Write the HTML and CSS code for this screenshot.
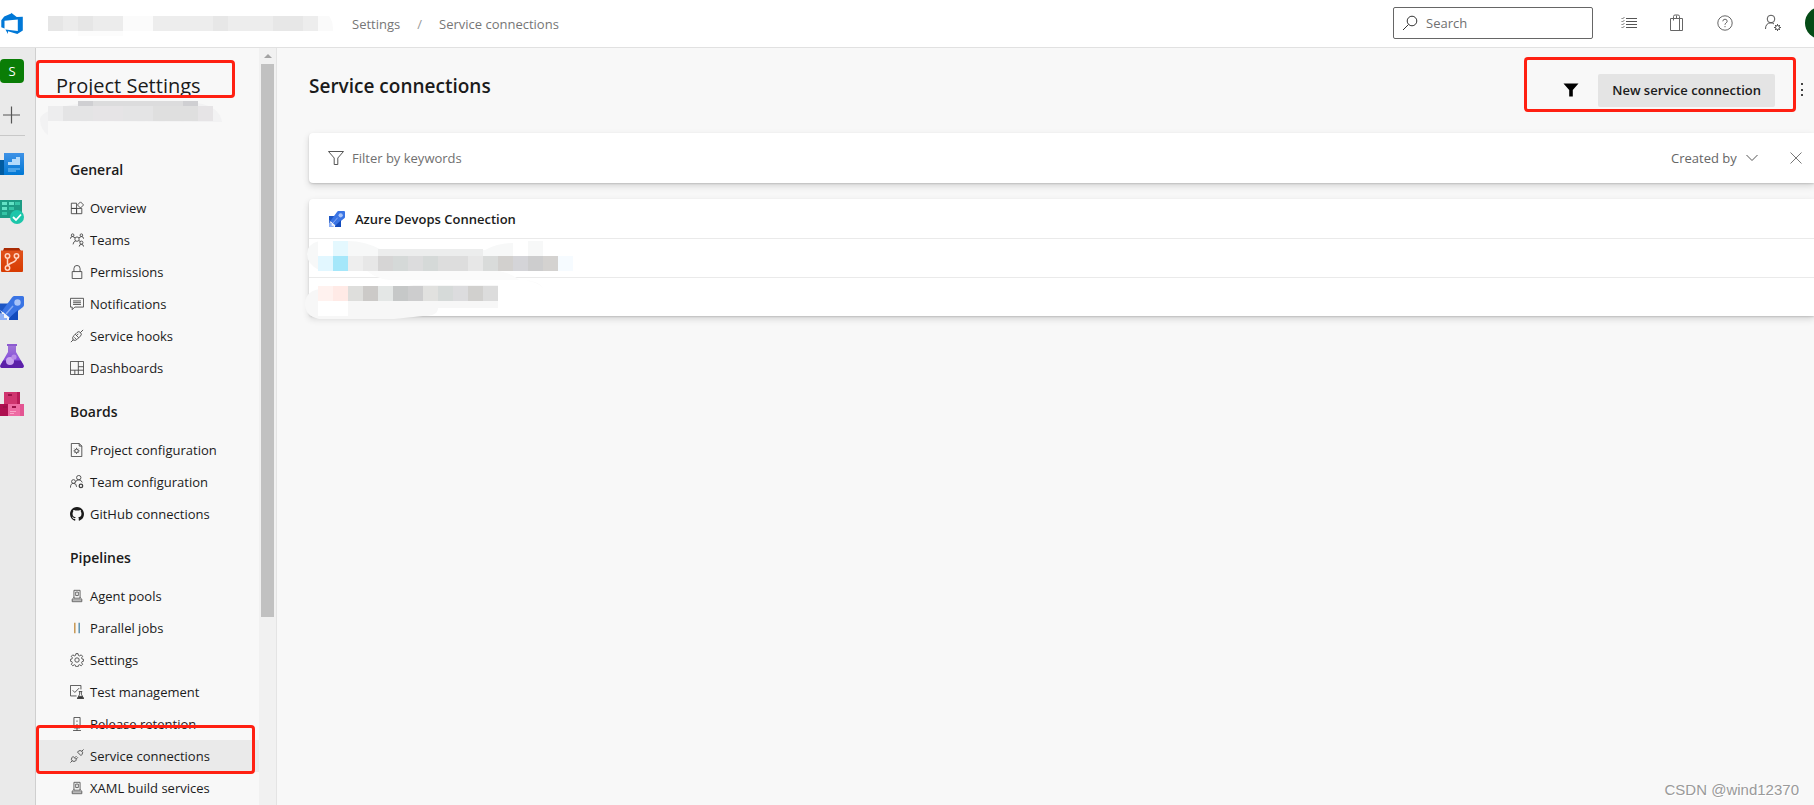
FILE: index.html
```html
<!DOCTYPE html>
<html lang="en">
<head>
<meta charset="utf-8">
<title>Service connections - Project Settings</title>
<link rel="stylesheet" href="styles.css">
</head>
<body>
<svg class="defs" aria-hidden="true">
  <defs>
    <linearGradient id="blue" x1="0" y1="0" x2="0" y2="1"><stop offset="0" stop-color="#3f92e6"/><stop offset="1" stop-color="#0078d4"/></linearGradient>
    <linearGradient id="orange" x1="0" y1="0" x2="0" y2="1"><stop offset="0" stop-color="#e0521c"/><stop offset="1" stop-color="#d83b01"/></linearGradient>
    <linearGradient id="purple" x1="0" y1="0" x2="0" y2="1"><stop offset="0" stop-color="#a177d6"/><stop offset="1" stop-color="#773adc"/></linearGradient>
  </defs>
  <symbol id="rocket" viewBox="0 0 24 24">
    <path d="M0 7.500h9l-7 10H0zM18 14v10H7.500z" fill="#1d56c4"/>
    <path d="M14 0h8.500q1.500 0 1.500 1.500V9q0 1-1 2L9 22l-7-7L12 1.500Q13 0 14 0z" fill="#3a74e4"/>
    <path d="M18 14v10h-9l1-3z" fill="#124bbd"/>
    <circle cx="17.500" cy="6.500" r="3.200" fill="#a9c4f8"/>
    <path d="M13 10l-7 8" stroke="#86aaf3" stroke-width="1.500"/>
    <path d="M0 14l9 7v3H6.500z" fill="#f2f5fb"/>
    <path d="M0 18h4v4h3v2H0z" fill="#8eb0f5"/>
  </symbol>
  <symbol id="server" viewBox="0 0 16 16">
    <path d="M4.500 1.500h7v9h-7zM6.500 3.500h3v4h-3zM4.500 9.500l-2 2.500v2.500h11V12l-2-2.500M2.500 12.500h11" fill="none" stroke="#555"/>
  </symbol>
  <symbol id="funnel" viewBox="0 0 16 16"><path d="M.5 1.500h15L9.800 8v6.500H6.200V8z"/></symbol>
</svg>

<div class="app">
  <header class="topbar">
    <a class="logo" href="#" aria-label="Azure DevOps">
      <svg width="24" height="24" viewBox="0 0 24 24"><path d="M22.800 4.800v13.700L17.300 22 8 19.300V22L5.400 17.600l12.400 1.300V7.400L4.500 8.700v7.800L1.300 15.200V8.300L4.200 4.400l7-2.800V.8l5.500 4.300z" fill="#0078d7"/></svg>
    </a>
    <svg class="crumb-mosaic" width="290" height="22" viewBox="0 0 290 22" aria-hidden="true">
      <path d="M33 16h45v5H33z" fill="#fcfcfc"/>
      <path d="M3 1h75v15H3z" fill="#ececec"/><path d="M3 1h15v15H3zM33 1h15v15H33z" fill="#e6e6e6"/>
      <path d="M78 1h30v15H78z" fill="#fbfbfb"/>
      <path d="M108 1h165v15H108z" fill="#ededed"/><path d="M168 1h15v15h-15zM228 1h30v15h-30z" fill="#e7e7e7"/>
      <path d="M273 1h11q4 4 4 15h-15z" fill="#fafafa"/>
    </svg>
    <nav class="crumbs" aria-label="Breadcrumb">
      <a href="#">Settings</a><span class="slash">/</span><a href="#">Service connections</a>
    </nav>
    <label class="search">
      <svg width="16" height="16" viewBox="0 0 16 16" fill="none" stroke="#333"><circle cx="10" cy="6" r="4.800"/><path d="M6.500 9.500L1 15"/></svg>
      <input type="text" placeholder="Search" aria-label="Search">
    </label>
    <div class="actions">
      <button type="button" aria-label="Work items"><svg width="16" height="16" viewBox="0 0 16 16" fill="none" stroke="#555"><path d="M5 3.500h11M5 6.500h11M5 9.500h11M5 12.500h11" /><path d="M.5 3l1 1L3.500 2M.5 6l1 1 2-2M.5 9l1 1 2-2M.5 12l1 1 2-2" stroke-width=".8"/></svg></button>
      <button type="button" aria-label="Marketplace"><svg width="16" height="18" viewBox="0 0 16 18" fill="none" stroke="#666"><path d="M1.500 4.500h12v12h-12zM10.500 4.500v12M4.500 6.500v-4q0-1.500 1.500-1.500h3q1.500 0 1.500 1.500v2M7.500 4V1.500"/></svg></button>
      <button type="button" aria-label="Help"><svg width="16" height="16" viewBox="0 0 16 16" fill="none" stroke="#666"><circle cx="8" cy="8" r="7.200"/><path d="M5.800 6.300Q6 4.200 8 4.200t2.200 1.900Q10.200 7.200 9 8T8 9.800M8 11v1.200"/></svg></button>
      <button type="button" aria-label="User settings"><svg width="18" height="18" viewBox="0 0 18 18" fill="none" stroke="#555"><circle cx="7" cy="5" r="3.800"/><path d="M1.500 15q0-6 5.500-6.200Q9 9 10 10"/><circle cx="13.500" cy="13.500" r="2"/><path d="M13.500 10v1.500M13.500 15.500V17M10 13.500h1.500M15.500 13.500H17M11 11l1 1M15 15l1 1M16 11l-1 1M12 15l-1 1"/></svg></button>
      <button type="button" class="avatar" aria-label="Account"></button>
    </div>
  </header>

  <div class="body">
    <nav class="rail" aria-label="Services">
      <a class="project" href="#"><span>S</span></a>
      <button type="button" class="add" aria-label="Add"><svg width="24" height="24" viewBox="0 0 24 24"><path d="M3 12h17M11.500 3.500v17" stroke="#555" stroke-width="1.200"/></svg></button>
      <hr>
      <a href="#" aria-label="Overview"><svg width="24" height="24" viewBox="0 0 24 24"><path d="M0 8h5v15H0z" fill="#005ba1"/><path d="M4 1h20v21q0 1-1 1H4z" fill="url(#blue)"/><path d="M8 10h4V7h4V5h4v8H8z" fill="#b5dbfb"/><path d="M8 16h12v2h-4v2H8z" fill="#4ba3e8"/></svg></a>
      <a href="#" aria-label="Boards"><svg width="24" height="24" viewBox="0 0 24 24"><path d="M0 0h22v18H0z" fill="#1d9c84"/><path d="M2 2h5v3H2zM9 2h5v3H9zM2 7h5v3H2z" fill="#63e2c5"/><path d="M15 2h5v3h-5zM9 7h5v3H9zM2 12h5v3H2z" fill="#35c4a5"/><circle cx="17" cy="17" r="7" fill="#1cc6aa"/><path d="M13 17l3 3 5-5.500" fill="none" stroke="#fff" stroke-width="1.800"/></svg></a>
      <a href="#" aria-label="Repos"><svg width="24" height="24" viewBox="0 0 24 24"><path d="M4 0h15l2 3H3z" fill="#a92b04"/><path d="M1 2.500h22V23q0 1-1 1H2q-1 0-1-1z" fill="url(#orange)"/><g fill="none" stroke="#ffd5c3" stroke-width="1.500"><circle cx="7.500" cy="8" r="2.200"/><circle cx="16.500" cy="8" r="2.200"/><circle cx="7.500" cy="20" r="2.200"/><path d="M7.500 10v8M16.500 10q0 3-4 4.500T8 18"/></g></svg></a>
      <a href="#" aria-label="Pipelines"><svg width="24" height="24"><use href="#rocket"/></svg></a>
      <a href="#" aria-label="Test Plans"><svg width="24" height="24" viewBox="0 0 24 24"><path d="M8 1h8v7l7.500 13q.8 3-1.500 3H2q-2.300 0-1.500-3L8 8z" fill="url(#purple)"/><path d="M3.200 16.500h17.600l2.700 4.500q.8 3-1.500 3H2q-2.300 0-1.500-3z" fill="#5c20a8"/><path d="M7 0h10v2H7z" fill="#8d5bd0"/><circle cx="10" cy="17" r="4" fill="#c9a6ef"/><circle cx="14" cy="13" r="2.600" fill="#b78be8"/></svg></a>
      <a href="#" aria-label="Artifacts"><svg width="24" height="24" viewBox="0 0 24 24"><path d="M4 0h16v12H4z" fill="#d0356f"/><path d="M17 0h3v12h-3z" fill="#b81b58"/><path d="M0 12h8v12H0z" fill="#ad0f4f"/><path d="M8 12h16v12H8z" fill="#ee6ba3"/><path d="M20 12h4v12h-4z" fill="#e35592"/><path d="M8 2h4v2H8zM3 14h4v2H3zM12 14h4v2h-4z" fill="#9b1248"/><path d="M10 19.500h6M10 21.500h4" stroke="#f9a5c8"/></svg></a>
    </nav>

    <aside class="side">
      <div class="side-content">
        <h2 class="side-title">Project Settings</h2>
        <svg class="side-mosaic" width="182" height="36" viewBox="0 0 182 36" aria-hidden="true">
          <path d="M8 34Q0 28 0 18 2 8 38 3l120-1q22 4 24 19h-18L8 20z" fill="#f2f2f3"/>
          <path d="M38 0h120v5H38z" fill="#dcdcdd"/><path d="M38 0h15v5H38zM143 0h15v5h-15z" fill="#cfcfd2"/>
          <path d="M8 5h165v15H8z" fill="#e4e4e5"/><path d="M8 5h15v15H8z" fill="#ededee"/><path d="M53 5h30v15H53zM158 5h15v15h-15z" fill="#e6e4e6"/><path d="M113 5h45v15h-45z" fill="#dfdfdf"/>
        </svg>
        <h3>General</h3>
        <ul>
          <li><a href="#"><svg viewBox="0 0 16 16"><path d="M1.500 2.500h6v6h-6zM1.500 8.500h6v6h-6zM7.500 8.500h6v6h-6zM8.500 4.500l3.500-3.500 3.500 3.500L12 8z"/></svg>Overview</a></li>
          <li><a href="#"><svg viewBox="0 0 16 16"><circle cx="3" cy="2.500" r="1.500"/><circle cx="13" cy="2.500" r="1.500"/><circle cx="8" cy="7" r="2.500"/><circle cx="13" cy="11" r="1.800"/><path d="M.5 6.500q0-2.500 2.500-2.500l3 1.500M15.500 6.500Q15.500 4 13 4l-3 1.500M3.500 13q0-3 3-4M10 8.500l2 1.500M10.500 15.500q0-2.500 2.500-2.500t2.500 2.500"/></svg>Teams</a></li>
          <li><a href="#"><svg viewBox="0 0 16 16"><path d="M2.500 7.500h11v8h-11zM4.500 7.500V4Q4.500.5 8 .5T11.500 4v3.500"/></svg>Permissions</a></li>
          <li><a href="#"><svg viewBox="0 0 16 16"><path d="M.5 1.500h15v10h-10l-3 3v-3h-2zM3.500 4.500h9M3.500 6.500h9M3.500 8.500h9"/></svg>Notifications</a></li>
          <li><a href="#"><svg viewBox="0 0 16 16"><path d="M15 1l-3 3M1 15l2.500-2.500M3.500 12.500q-1.500-3 1-5L8 4q2-2 4 0t0 4l-3.500 3.500q-2.500 2.500-5 1zM6 6l4 4M7.500 7.500l2-2M5 9.500l2 2"/></svg>Service hooks</a></li>
          <li><a href="#"><svg viewBox="0 0 16 16"><path d="M.5.5h15v15H.5zM.5 10.500h9M9.500.5v15M9.500 6.500h6M5.500 10.500v5M9.500 10.500h6"/></svg>Dashboards</a></li>
        </ul>
        <h3>Boards</h3>
        <ul>
          <li><a href="#"><svg viewBox="0 0 16 16"><path d="M1.500.5h9l3 3v12h-12zM10.500.5v3h3"/><circle cx="7.500" cy="9" r="2"/><path d="M7.500 5.500V7M7.500 11v1.500M4 9h1.500M9.500 9H11M5 6.500l1 1M9 10.500l1 1M10 6.500l-1 1M6 10.500l-1 1"/></svg>Project configuration</a></li>
          <li><a href="#"><svg viewBox="0 0 16 16"><circle cx="10" cy="3" r="2.500"/><circle cx="4" cy="7.500" r="2.200"/><circle cx="12.500" cy="12.500" r="2" stroke-width="1.500"/><path d="M.5 14.500q0-5 3.500-5t3.500 4M6 8.500q1-3 4-3t4 3"/></svg>Team configuration</a></li>
          <li><a href="#"><svg class="solid" viewBox="0 0 16 16"><path d="M8 0C3.580 0 0 3.580 0 8c0 3.540 2.290 6.530 5.470 7.590.4.070.550-.170.550-.380 0-.190-.010-.820-.010-1.490-2.010.370-2.530-.490-2.690-.940-.090-.230-.480-.940-.820-1.130-.280-.150-.680-.520-.010-.530.630-.010 1.080.580 1.230.820.720 1.210 1.870.870 2.330.660.070-.520.280-.870.510-1.070-1.780-.2-3.640-.890-3.640-3.950 0-.870.310-1.590.820-2.150-.080-.2-.360-1.020.080-2.120 0 0 .670-.210 2.200.820a7.600 7.600 0 014 0c1.530-1.040 2.200-.820 2.200-.820.440 1.100.160 1.920.080 2.120.510.560.820 1.270.820 2.150 0 3.070-1.870 3.750-3.650 3.950.290.250.540.730.540 1.480 0 1.070-.010 1.930-.010 2.200 0 .210.150.460.550.380A8 8 0 0016 8c0-4.420-3.580-8-8-8z"/></svg>GitHub connections</a></li>
        </ul>
        <h3>Pipelines</h3>
        <ul>
          <li><a href="#"><svg><use href="#server"/></svg>Agent pools</a></li>
          <li><a href="#"><svg viewBox="0 0 16 16"><path d="M5.500 2v12" stroke="#c08a3c" stroke-width="1.500"/><path d="M10.500 2v12" stroke="#4a86a8" stroke-width="1.500"/></svg>Parallel jobs</a></li>
          <li><a href="#"><svg viewBox="0 0 16 16"><circle cx="8" cy="8" r="2.500"/><path d="M6.800.7h2.400l.4 2 1.400.6 1.800-1.200 1.600 1.700-1.200 1.700.6 1.400 1.800.4v2l-1.800.5-.6 1.400 1.200 1.700-1.600 1.700-1.800-1.200-1.400.6-.4 1.800H6.800l-.5-1.800-1.400-.6-1.700 1.200-1.700-1.700 1.200-1.700-.6-1.400L.4 9.300v-2l1.700-.4.600-1.400-1.200-1.700 1.700-1.700 1.700 1.200 1.400-.6z"/></svg>Settings</a></li>
          <li><a href="#"><svg viewBox="0 0 16 16"><path d="M12.500 5V.5H.5v12h7M3 6l2.500 2.500L10.500 3.500"/><path d="M10 7.500h4M11 7.500v3l-2.500 5h7l-2.500-5v-3"/><path d="M10 13h4l1.500 2.500h-7z" fill="#333"/></svg>Test management</a></li>
          <li><a href="#"><svg viewBox="0 0 16 16"><path d="M4.500.5h7v12h-7zM8 4v1.500M8 8v1.500M8 12.500v3M3.500 15.500h9"/></svg>Release retention</a></li>
          <li><a href="#" class="current" aria-current="page"><svg viewBox="0 0 16 16"><path d="M15.500.5l-2 2M.5 15.500l2-2M8.500 3.500l1-1q2-1.500 4 0t0 4l-1 1zM3.500 8.500l4 4-1 1q-2 1.500-4 0t0-4zM5.500 10L7.500 8M7 11.500L9 9.500"/></svg>Service connections</a></li>
          <li><a href="#"><svg><use href="#server"/></svg>XAML build services</a></li>
        </ul>
      </div>
      <div class="scrollbar" aria-hidden="true"><span class="arrow"></span><span class="thumb"></span></div>
    </aside>

    <main class="main">
      <div class="heading">
        <h1>Service connections</h1>
        <button type="button" class="icon-button filter-toggle" aria-label="Toggle filter"><svg width="16" height="16"><use href="#funnel"/></svg></button>
        <button type="button" class="new-button">New service connection</button>
        <button type="button" class="icon-button more" aria-label="More actions"><svg width="4" height="16" viewBox="0 0 4 16"><path d="M1 1h2v2H1zM1 7h2v2H1zM1 12h2v2H1z" fill="#444"/></svg></button>
      </div>

      <section class="card filter-bar">
        <label class="keywords">
          <svg width="16" height="16" fill="none" stroke="#555"><use href="#funnel"/></svg>
          <input type="text" placeholder="Filter by keywords" aria-label="Filter by keywords">
        </label>
        <div class="created">
          <select aria-label="Created by"><option>Created by</option></select>
          <svg width="12" height="8" viewBox="0 0 12 8" fill="none" stroke="#555"><path d="M.5 1L6 6.500 11.500 1"/></svg>
        </div>
        <button type="button" class="icon-button" aria-label="Clear filters"><svg width="12" height="12" viewBox="0 0 12 12" stroke="#777"><path d="M.5.5l11 11M11.500.5l-11 11"/></svg></button>
      </section>

      <section class="card list">
        <a class="row" href="#"><svg width="16" height="16"><use href="#rocket"/></svg>Azure Devops Connection</a>
        <div class="row"></div>
        <div class="row"></div>
        <svg class="list-mosaic" width="270" height="80" viewBox="0 0 270 80" aria-hidden="true">
          <path d="M14 1Q2 4 2 14t12 16h239V16h-15V1h-15v15h-15V3q-15 0-28 7H77Q60 1 43 1z" fill="#f7f8f8"/>
          <path d="M62 31q10 8 22 9h130q20 0 24 8-8-8-24-8-6-6-20-9z" fill="#fbfbfb"/>
          <path d="M14 49Q0 52 0 64t14 15h75l29-3q15 0 15-8h60V45h-84l-20 3z" fill="#f7f7f7"/>
          <path d="M13 1h15v15H13z" fill="#fff"/><path d="M28 1h15v15H28z" fill="#e4f8fe"/><path d="M73 9h105v7H73z" fill="#eceded"/>
          <path d="M13 16h15v15H13z" fill="#e2f7ff"/><path d="M28 16h15v15H28z" fill="#a5e7fa"/><path d="M43 16h15v15H43z" fill="#eee"/><path d="M58 16h15v15H58z" fill="#e7e7e7"/><path d="M73 16h15v15H73z" fill="#d6d5d5"/><path d="M88 16h15v15H88z" fill="#d5d9d8"/><path d="M103 16h15v15h-15z" fill="#dcdcdd"/><path d="M118 16h15v15h-15z" fill="#d5d9d8"/><path d="M133 16h30v15h-30z" fill="#dddddd"/><path d="M163 16h15v15h-15z" fill="#e7e7e7"/><path d="M178 16h15v15h-15z" fill="#d9dbda"/><path d="M193 16h15v15h-15z" fill="#d2d0ce"/><path d="M208 16h15v15h-15z" fill="#d4d4d8"/><path d="M223 16h15v15h-15z" fill="#cdcdce"/><path d="M238 16h15v15h-15z" fill="#d4d2d0"/><path d="M253 16h15v15h-15z" fill="#f6fbff"/>
          <path d="M13 61h30v15H13z" fill="#fff"/>
          <path d="M13 46h15v15H13z" fill="#fff2ef"/><path d="M28 46h15v15H28z" fill="#ffeae6"/><path d="M43 46h15v15H43z" fill="#dededc"/><path d="M58 46h15v15H58z" fill="#cccac8"/><path d="M73 46h15v15H73z" fill="#e4e7e6"/><path d="M88 46h15v15H88z" fill="#c6c8c8"/><path d="M103 46h15v15h-15z" fill="#cdcdce"/><path d="M118 46h15v15h-15z" fill="#e1e1df"/><path d="M133 46h15v15h-15z" fill="#d6dad9"/><path d="M148 46h15v15h-15z" fill="#dcdcde"/><path d="M163 46h15v15h-15z" fill="#d1d0ce"/><path d="M178 46h15v15h-15z" fill="#dcdcdc"/>
        </svg>
      </section>
    </main>
  </div>

  <div class="mark mark-title"></div>
  <div class="mark mark-nav"></div>
  <div class="mark mark-new"></div>
  <div class="watermark">CSDN @wind12370</div>
</div>
</body>
</html>
```
FILE: styles.css
```css
* { box-sizing: border-box; }
body {
  margin: 0;
  font-family: "Open Sans", "Noto Sans", sans-serif;
  font-size: 13px;
  line-height: 20px;
  color: #1b1b1b;
  background: #f8f8f8;
}
a { color: inherit; text-decoration: none; }
button, input, select { font: inherit; color: inherit; border: 0; background: none; padding: 0; margin: 0; }
input { outline: 0; min-width: 0; flex: 1; }
input::placeholder { color: #707070; opacity: 1; }
h1, h2, h3, ul { margin: 0; padding: 0; }
h1, h3 { font-weight: 600; }
ul { list-style: none; }
svg { display: block; flex: none; }
.defs { position: absolute; width: 0; height: 0; }

.app { position: relative; display: flex; flex-direction: column; height: 100vh; overflow: hidden; }

.topbar { display: flex; align-items: center; height: 48px; flex: none; background: #fff; border-bottom: 1px solid #e1e1e1; overflow: hidden; }
.logo { width: 45px; }
.crumb-mosaic { margin-top: 4px; }
.crumbs { display: flex; gap: 17px; padding-left: 17px; color: #767676; }
.slash { color: #999; }
.search { display: flex; align-items: center; gap: 8px; width: 200px; height: 32px; margin: 0 12px 2px auto; padding: 0 8px; border: 1px solid #666; border-radius: 2px; }
.actions { display: flex; align-items: center; margin-bottom: 2px; }
.actions button { display: grid; place-items: center; width: 48px; height: 32px; }
.actions .avatar { width: 32px; margin: 0 -23px 0 8px; border-radius: 50%; background: #054b16; }

.body { display: flex; flex: 1; min-height: 0; }

.rail { display: flex; flex-direction: column; flex: none; width: 36px; background: #eaeaea; border-right: 1px solid #cfcfcf; }
.rail a { display: flex; align-items: center; height: 48px; }
.rail .project { height: 46px; }
.project span { width: 24px; height: 24px; border-radius: 4px; background: #0a7d06; color: #fff; text-align: center; line-height: 24px; }
.rail .add { display: flex; align-items: center; height: 41px; }
.rail hr { width: 25px; margin: 0 0 4px; border: 0; border-top: 1px solid #c8c8c8; }

.side { display: flex; flex: none; width: 241px; border-right: 1px solid #e4e4e4; }
.side-content { flex: 1; min-width: 0; overflow: hidden; }
.side-title { padding: 24px 0 1px 20px; font-size: 20px; line-height: 28px; font-weight: 500; }
.side-mosaic { margin-left: 4px; }
.side h3 { padding: 13px 0 7px 34px; font-size: 14px; line-height: 30px; }
.side-mosaic + h3 { padding-top: 18px; }
.side li a { display: flex; align-items: center; gap: 6px; height: 32px; padding-left: 34px; white-space: nowrap; }
.side li svg { width: 14px; height: 14px; fill: none; stroke: #444; }
.side li .solid { fill: #1b1b1b; stroke: none; }
.side li .current { background: #eaeaea; }
.scrollbar { display: flex; flex-direction: column; align-items: center; width: 17px; background: #f1f1f1; }
.arrow { margin: 6px 0 6px; border: 4px solid transparent; border-top: 0; border-bottom-color: #a3a3a3; }
.thumb { width: 13px; height: 73%; background: #c1c1c1; }

.main { flex: 1; min-width: 0; padding: 24px 0 0 32px; }
.heading { display: flex; align-items: center; height: 36px; margin-bottom: 25px; }
h1 { margin: 0 auto 8px 0; font-size: 19px; line-height: 28px; }
.icon-button { display: grid; place-items: center; width: 36px; height: 32px; }
.filter-toggle { margin-right: 9px; }
.new-button { height: 33px; padding: 0 14px; border-radius: 2px; background: #e4e4e4; font-weight: 600; }
.more { width: 54px; margin-right: -15px; }

.card { position: relative; background: #fff; border-radius: 4px 0 0 4px; box-shadow: 0 3px 7px rgba(0, 0, 0, .14), 0 1px 2px rgba(0, 0, 0, .14); }
.filter-bar { display: flex; align-items: center; height: 50px; margin-bottom: 16px; padding-left: 19px; color: #666; }
.keywords { display: flex; align-items: center; flex: 1; gap: 8px; }
.created { display: flex; align-items: center; gap: 9px; margin-right: 20px; }
select { appearance: none; }
.row { display: flex; align-items: center; gap: 10px; height: 39px; padding-left: 20px; font-weight: 600; }
.row + .row { border-top: 1px solid #eaeaea; }
.list-mosaic { position: absolute; left: -4px; top: 41px; }

.mark { position: absolute; border: 3px solid #ff2012; border-radius: 4px; }
.mark-title { left: 36px; top: 60px; width: 199px; height: 38px; }
.mark-nav { left: 36px; top: 725px; width: 219px; height: 49px; }
.mark-new { right: 18px; top: 57px; width: 272px; height: 55px; }
.watermark { position: absolute; right: 15px; bottom: 5px; font-family: "Liberation Sans", sans-serif; font-size: 15px; color: #9a9a9a; text-shadow: 1px 1px 0 #fff; }
```
